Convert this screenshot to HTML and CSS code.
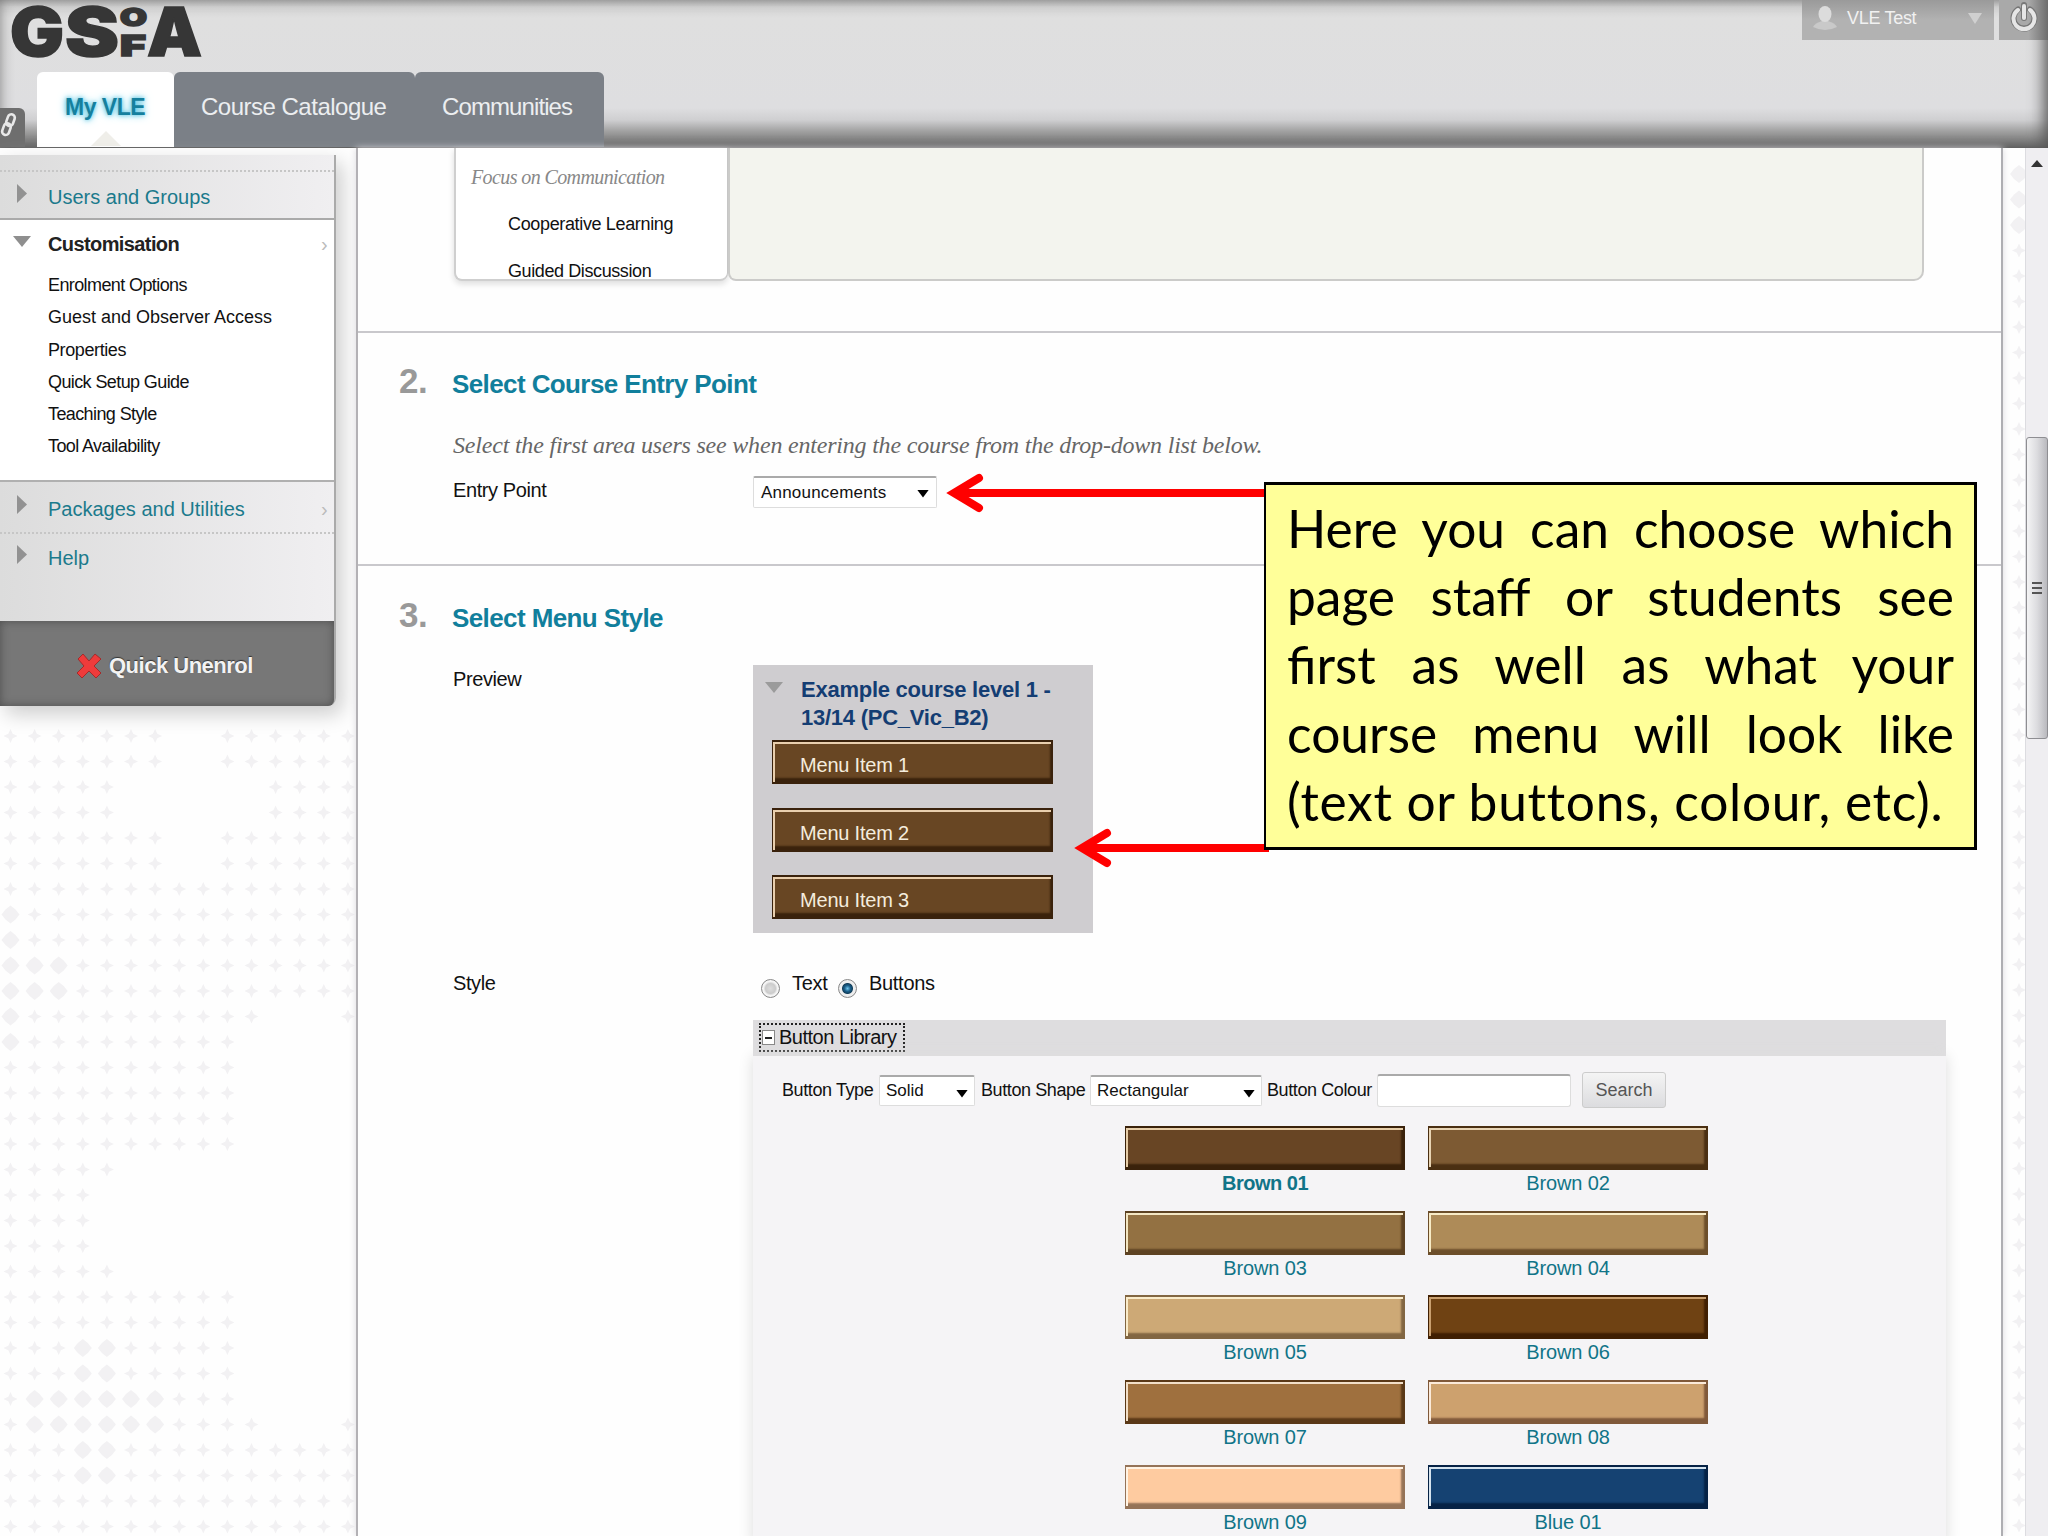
FILE: index.html
```
<!DOCTYPE html>
<html lang="en">
<head>
    <meta charset="UTF-8">
    <meta name="viewport" content="width=device-width, initial-scale=1.0">
    <title>My VLE - Customisation</title>
    <link rel="stylesheet" href="styles.css">
</head>
<body>
    <header class="top-bar">
        <div class="brand-row">
            <svg class="logo" width="206" height="66" viewBox="0 0 206 66">
                <text x="10" y="56" font-size="67" textLength="54" lengthAdjust="spacingAndGlyphs">G</text>
                <text x="65" y="56" font-size="67" textLength="54" lengthAdjust="spacingAndGlyphs">S</text>
                <text x="120" y="26" font-size="24" textLength="27" lengthAdjust="spacingAndGlyphs">O</text>
                <text x="120" y="56" font-size="29" textLength="26" lengthAdjust="spacingAndGlyphs">F</text>
                <text x="147" y="56" font-size="67" textLength="55" lengthAdjust="spacingAndGlyphs">A</text>
            </svg>
            <div class="user-tools">
                <div class="user-menu">
                    <svg width="24" height="26" viewBox="0 0 24 26">
                        <path d="M0 22 Q2 18 9 16 L15 16 Q22 18 24 22 Q18 25 12 25 Q6 25 0 22Z" fill="#c9c9c9"/>
                        <ellipse cx="12" cy="9" rx="6.5" ry="8" fill="#dcdcdc"/>
                    </svg>
                    <span class="user-name">VLE Test</span>
                    <svg class="user-arrow" width="14" height="11" viewBox="0 0 14 11"><path d="M0 0H14L7 11Z" fill="#d0d0d0"/></svg>
                </div>
                <div class="power">
                    <svg width="28" height="32" viewBox="0 0 28 32" fill="none" stroke-linecap="round">
                        <path d="M8 8.5 A10.5 10.5 0 1 0 20 8.5" stroke="#777" stroke-width="6"/>
                        <path d="M14 4V17" stroke="#777" stroke-width="6"/>
                        <path d="M8 9 A10.5 10.5 0 1 0 20 9" stroke="#e6e6e6" stroke-width="4"/>
                        <path d="M14 5V17" stroke="#e6e6e6" stroke-width="4"/>
                    </svg>
                </div>
            </div>
        </div>
        <nav class="tabs">
            <div class="link-tab">
                <svg width="18" height="26" viewBox="0 0 18 26" fill="none" stroke="#e8e8e8" stroke-width="2.6">
                    <rect x="7" y="2" width="7" height="12" rx="3.5" transform="rotate(20 10 8)"/>
                    <rect x="3" y="11" width="7" height="12" rx="3.5" transform="rotate(20 6 17)"/>
                </svg>
            </div>
            <a class="tab active">My VLE</a>
            <a class="tab catalogue">Course Catalogue</a>
            <a class="tab communities">Communities</a>
        </nav>
    </header>

    <main class="page">
        <svg class="dots" id="dots" width="2025" height="1388"></svg>

        <aside class="sidebar">
            <div class="side-row first"><i class="tri right"></i><span>Users and Groups</span></div>
            <div class="side-open">
                <div class="side-head"><i class="tri down"></i><span>Customisation</span><b class="chev">›</b></div>
                <ul class="side-list">
                    <li class="tight">Enrolment Options</li>
                    <li class="wide">Guest and Observer Access</li>
                    <li>Properties</li>
                    <li class="tight">Quick Setup Guide</li>
                    <li class="tight">Teaching Style</li>
                    <li class="tight">Tool Availability</li>
                </ul>
            </div>
            <div class="side-row packages"><i class="tri right"></i><span>Packages and Utilities</span><b class="chev">›</b></div>
            <div class="side-row help"><i class="tri right"></i><span>Help</span></div>
            <div class="unenrol">
                <svg width="26" height="26" viewBox="0 0 26 26"><path d="M2 6 L7 1 L13 8 L19 1 L25 6 L18 13 L25 20 L20 25 L13 18 L6 25 L1 20 L8 13Z" fill="#ee3b3b" stroke="#a52a2a"/></svg>
                <span>Quick Unenrol</span>
            </div>
        </aside>

        <div class="content">
            <section class="styles-section">
                <div class="style-picker">
                    <div class="style-list">
                        <div class="style-group">Focus on Communication</div>
                        <div class="style-name">Cooperative Learning</div>
                        <div class="style-name guided">Guided Discussion</div>
                    </div>
                    <div class="style-preview"></div>
                </div>
            </section>

            <section class="step entry">
                <h2><span class="num">2.</span>Select Course Entry Point</h2>
                <p class="hint">Select the first area users see when entering the course from the drop-down list below.</p>
                <div class="field">
                    <label>Entry Point</label>
                    <div class="select announce"><span>Announcements</span><i class="caret"></i></div>
                </div>
            </section>

            <section class="step menu-style">
                <h2><span class="num">3.</span>Select Menu Style</h2>
                <div class="field preview-field">
                    <label>Preview</label>
                    <div class="menu-preview">
                        <div class="preview-title"><i class="tri down"></i><span>Example course level 1 -<br>13/14 (PC_Vic_B2)</span></div>
                        <div class="menu-btn">Menu Item 1</div>
                        <div class="menu-btn">Menu Item 2</div>
                        <div class="menu-btn">Menu Item 3</div>
                    </div>
                </div>
                <div class="field style-field">
                    <label>Style</label>
                    <div class="radios">
                        <i class="radio"></i><span class="radio-text">Text</span>
                        <i class="radio checked"></i><span class="radio-buttons">Buttons</span>
                    </div>
                </div>
                <div class="library">
                    <div class="library-bar"><div class="library-toggle"><i class="minus"></i><span>Button Library</span></div></div>
                    <div class="library-body">
                        <div class="filters">
                            <span class="f-type">Button Type</span>
                            <div class="select solid"><span>Solid</span><i class="caret"></i></div>
                            <span class="f-shape">Button Shape</span>
                            <div class="select shape"><span>Rectangular</span><i class="caret"></i></div>
                            <span class="f-colour">Button Colour</span>
                            <div class="text-input"></div>
                            <div class="search">Search</div>
                        </div>
                        <div class="swatches">
                            <div class="swatch brown1 selected"><i></i>Brown 01</div>
                            <div class="swatch brown2"><i></i>Brown 02</div>
                            <div class="swatch brown3"><i></i>Brown 03</div>
                            <div class="swatch brown4"><i></i>Brown 04</div>
                            <div class="swatch brown5"><i></i>Brown 05</div>
                            <div class="swatch brown6"><i></i>Brown 06</div>
                            <div class="swatch brown7"><i></i>Brown 07</div>
                            <div class="swatch brown8"><i></i>Brown 08</div>
                            <div class="swatch brown9"><i></i>Brown 09</div>
                            <div class="swatch blue1"><i></i>Blue 01</div>
                        </div>
                    </div>
                </div>
            </section>
        </div>

        <div class="scrollbar">
            <svg width="14" height="8" viewBox="0 0 14 8"><path d="M7 0L13 7H1Z" fill="#333"/></svg>
            <div class="thumb"><i></i><i></i><i></i></div>
        </div>
    </main>

    <!-- Notes over the page -->
    <svg class="arrow arrow-entry" width="324" height="44" viewBox="0 0 324 44" fill="none" stroke="#f00" stroke-width="8">
        <path d="M10 22H324"/>
        <path d="M34 7L9 22L34 37" stroke-linecap="round"/>
    </svg>
    <svg class="arrow arrow-menu" width="196" height="44" viewBox="0 0 196 44" fill="none" stroke="#f00" stroke-width="8">
        <path d="M10 22H196"/>
        <path d="M34 7L9 22L34 37" stroke-linecap="round"/>
    </svg>
    <div class="callout">
        <div>Here you can choose which</div>
        <div>page staff or students see</div>
        <div>first as well as what your</div>
        <div>course menu will look like</div>
        <div class="last">(text or buttons, colour, etc).</div>
    </div>

    <script src="script.js"></script>
</body>
</html>
```

FILE: styles.css
```
/* General Styling */
* {
    box-sizing: border-box;
}

body {
    margin: 0;
    width: 2048px;
    height: 1536px;
    overflow: hidden;
    position: relative;
    font-family: "Liberation Sans", Arial, sans-serif;
    font-size: 20px;
    color: #111;
    background: #fefefe;
}

h2, p, ul {
    margin: 0;
    padding: 0;
}

i, b {
    display: block;
    flex: none;
}

svg {
    display: block;
    flex: none;
}

/* Header */
.top-bar {
    height: 148px;
    display: flex;
    flex-direction: column;
    justify-content: space-between;
    background: linear-gradient(#b9b9b9 0, #d2d2d2 7px, #dfdfdf 18px, #dedee0 108px, #cfcfd1 120px, #a2a2a2 131px, #6c6c6c 146px, #5c5c5c 148px);
    box-shadow: inset -10px 0 16px -6px #555, inset 8px 0 14px -8px #888;
}

.brand-row {
    display: flex;
    justify-content: space-between;
}

.logo {
    font-family: Inter, "DejaVu Sans", sans-serif;
    font-weight: 900;
    fill: #363636;
    stroke: #363636;
    stroke-width: 1.5px;
}

.user-tools {
    display: flex;
    gap: 5px;
    height: 40px;
    color: #f1f1f1;
}

.user-menu {
    display: flex;
    align-items: center;
    width: 192px;
    padding: 0 12px 4px 11px;
    background: linear-gradient(#9a9a9a, #b2b2b2 50%);
}

.user-name {
    margin-left: 10px;
    font-size: 18px;
    letter-spacing: -0.3px;
}

.user-arrow {
    margin-left: auto;
}

.power {
    width: 49px;
    padding: 1px 0 0 11px;
    background: linear-gradient(90deg, #a9a9a9 60%, #6d6d6d);
}

.tabs {
    display: flex;
    align-items: flex-end;
    height: 76px;
    padding-bottom: 1px;
}

.link-tab {
    width: 25px;
    height: 39px;
    margin-right: 12px;
    padding: 4px 0 0 0;
    background: #6e6e6e;
    border-radius: 0 6px 0 0;
}

.tab {
    height: 75px;
    line-height: 70px;
    font-size: 24px;
    letter-spacing: -0.5px;
    color: #eceef0;
    background: #7b8087;
    border-radius: 6px 6px 0 0;
}

.tab.active {
    width: 137px;
    padding-left: 28px;
    font-size: 23px;
    font-weight: bold;
    color: #15809e;
    text-shadow: 0 0 4px #4fc0e0, 0 0 8px #6fd0e8;
    background: #fff;
}

/* pointer at the foot of the open tab */
.tab.active::after {
    content: "";
    display: block;
    width: 30px;
    height: 15px;
    margin: -11px 0 0 26px;
    background: #efeee9;
    clip-path: polygon(50% 0, 100% 100%, 0 100%);
}

.catalogue {
    width: 241px;
    padding-left: 27px;
}

.communities {
    width: 189px;
    padding-left: 27px;
    letter-spacing: -0.9px;
}

/* Page frame */
.page {
    position: relative;
    display: flex;
    height: 1388px;
}

.dots {
    position: absolute;
    left: 0;
    top: 0;
    fill: #f2f1f3;
}

/* Sidebar */
.sidebar {
    position: relative;
    width: 336px;
    height: 551px;
    margin: 7px 20px 0 0;
    border-right: 2px solid #aaa;
    background: linear-gradient(90deg, #dcdcdc, #f0eff1);
    border-radius: 0 0 8px 0;
    box-shadow: 6px 8px 20px #ccc;
}

.side-row, .side-head {
    display: flex;
    padding-left: 18px;
    line-height: 50px;
    color: #1b7a8c;
}

.side-row span, .side-head span {
    width: 253px;
}

.first {
    height: 48px;
    margin-top: 15px;
    border-top: 2px dotted #c6c6c6;
}

.packages {
    height: 50px;
    padding-top: 2px;
}

.help {
    height: 89px;
    border-top: 2px dotted #c6c6c6;
    line-height: 48px;
}

.side-open {
    height: 264px;
    background: #fff;
    border-top: 2px solid #aaa;
    border-bottom: 2px solid #b0b0b0;
}

.side-head {
    padding-left: 13px;
    line-height: 49px;
    font-weight: bold;
    letter-spacing: -0.6px;
    color: #222;
}

.side-row {
    padding-left: 17px;
}

.tri.right {
    width: 10px;
    height: 19px;
    margin: 12px 21px 0 0;
    background: #929292;
    clip-path: polygon(0 0, 100% 50%, 0 100%);
}

.packages .tri, .help .tri {
    margin-top: 11px;
}

.tri.down {
    width: 18px;
    height: 11px;
    margin: 16px 17px 0 0;
    background: #8f8f8f;
    clip-path: polygon(0 0, 100% 0, 50% 100%);
}

.chev {
    margin-left: 20px;
    font-weight: normal;
    color: #bbb;
}

.side-list {
    padding-left: 48px;
    list-style: none;
    font-size: 18px;
    line-height: 32.3px;
    letter-spacing: -0.4px;
}

.tight {
    letter-spacing: -0.6px;
}

.wide {
    letter-spacing: 0;
}

.unenrol {
    display: flex;
    align-items: center;
    height: 85px;
    padding: 5px 0 0 76px;
    gap: 7px;
    color: #f3f3f3;
    font-size: 22px;
    font-weight: bold;
    letter-spacing: -0.5px;
    text-shadow: 0 -1px 1px #333;
    background: #777;
    border-radius: 0 0 6px 0;
    box-shadow: inset 0 0 10px #4f4f4f;
}

/* Main content */
.content {
    position: relative;
    width: 1647px;
    background: #fefefe;
    border-left: 2px solid #b3b1b5;
    border-right: 2px solid #aeaeb2;
    box-shadow: 0 0 7px #dcdade;
}

.styles-section {
    height: 183px;
    padding-left: 96px;
}

.style-picker {
    display: flex;
    width: 1470px;
    height: 133px;
}

.style-list {
    width: 274px;
    height: 133px;
    overflow: hidden;
    background: #fff;
    border: 2px solid #cfcfcf;
    border-top: none;
    border-right: 1px solid #c6c6c6;
    border-radius: 0 0 8px 8px;
    box-shadow: 0 3px 6px #ddd;
}

.style-group {
    height: 53px;
    padding: 9px 0 0 15px;
    font: italic 20px/40px "Liberation Serif", serif;
    letter-spacing: -0.6px;
    color: #888;
}

.style-name {
    padding-left: 52px;
    font-size: 18px;
    line-height: 46px;
    letter-spacing: -0.35px;
}

.guided {
    padding-top: 1px;
    letter-spacing: -0.4px;
}

.style-preview {
    flex: 1;
    background: #f3f4ee;
    border: 2px solid #cbcbc9;
    border-top: none;
    border-radius: 0 0 10px 8px;
}

.step {
    border-top: 2px solid #c9c8cc;
    padding-left: 95px;
}

.entry {
    height: 233px;
    padding-top: 31px;
}

.menu-style {
    padding-top: 32px;
}

h2 {
    height: 40px;
    margin-left: -1px;
    line-height: 40px;
    font-size: 26px;
    letter-spacing: -0.6px;
    color: #117f9c;
}

.num {
    display: inline-block;
    width: 53px;
    margin-left: -53px;
    font-size: 35px;
    line-height: 30px;
    letter-spacing: -0.5px;
    color: #999;
}

.hint {
    margin-top: 21px;
    font: italic 24px/40px "Liberation Serif", serif;
    letter-spacing: -0.2px;
    color: #666;
}

.field {
    display: flex;
}

.field label {
    width: 300px;
    letter-spacing: -0.4px;
}

.entry .field {
    margin-top: 5px;
    align-items: center;
    line-height: 40px;
}

.select {
    display: flex;
    align-items: center;
    justify-content: space-between;
    background: #fff;
    border: 1px solid #ddd;
    border-top: 2px solid #aaa;
    border-radius: 2px;
    font-size: 17px;
    line-height: 28px;
    white-space: nowrap;
}

.announce {
    width: 184px;
    height: 32px;
    margin-top: 3px;
    padding: 1px 7px 0;
    letter-spacing: 0.2px;
}

.caret {
    width: 12px;
    height: 8px;
    background: #000;
    clip-path: polygon(0 0, 100% 0, 50% 100%);
}

.announce .caret {
    margin-top: 2px;
}

.preview-field {
    margin-top: 27px;
    line-height: 29px;
}

.menu-preview {
    width: 340px;
    height: 268px;
    padding: 11px 0 0 19px;
    background: #cfcdd0;
}

.preview-title {
    display: flex;
    height: 64px;
    margin-left: -7px;
    font-size: 22px;
    font-weight: bold;
    line-height: 27.5px;
    letter-spacing: -0.25px;
    color: #143d73;
}

.preview-title .tri {
    margin: 6px 18px 0 0;
    background: #9b9b9b;
}

.menu-btn {
    width: 281px;
    height: 44px;
    margin-bottom: 23.7px;
    padding-left: 27px;
    line-height: 46px;
    letter-spacing: -0.2px;
    color: #f4ecdd;
    background: #684623;
    border: 1px solid #3a220c;
    border-width: 2px 2px 2px 1px;
    box-shadow: inset 2px 2px 0 #e9cfae, inset -1px -4px 2px #3a220c;
}

.style-field {
    margin-top: 36px;
    line-height: 28px;
    letter-spacing: -0.3px;
}

.radios {
    display: flex;
    padding-left: 8px;
}

.radio {
    width: 19px;
    height: 19px;
    margin-top: 10px;
    border: 1px solid #888;
    border-radius: 50%;
    background: radial-gradient(#ddd 0, #ccc 5px, #f5f5f5 7px);
}

.radio.checked {
    background: radial-gradient(circle at 50% 50%, #6fc3ea 0, #1a5f8a 3px, #123f5c 5px, #eee 6px);
}

.radio-text {
    width: 46px;
    margin-left: 12px;
}

.radio-buttons {
    margin-left: 12px;
}

/* Button library */
.library {
    width: 1193px;
    margin: 22px 0 0 300px;
}

.library-bar {
    height: 36px;
    padding: 3px 6px;
    background: #dedddf;
}

.library-toggle {
    display: flex;
    align-items: center;
    gap: 4px;
    width: 146px;
    height: 29px;
    padding-left: 1px;
    border: 2px dotted #222;
    letter-spacing: -0.5px;
    white-space: nowrap;
}

.minus {
    width: 13px;
    height: 15px;
    border: 1px solid #888;
    background: linear-gradient(#222, #222) center / 7px 2px no-repeat #fff;
}

.library-body {
    height: 490px;
    padding: 16px 0 0 29px;
    background: #f5f4f6;
    box-shadow: 0 0 14px #ddd;
}

.filters {
    display: flex;
    align-items: center;
    height: 36px;
    font-size: 18px;
    letter-spacing: -0.4px;
    white-space: nowrap;
}

.f-type {
    width: 97px;
}

.f-shape {
    width: 109px;
    margin-left: 6px;
}

.f-colour {
    width: 110px;
    margin-left: 5px;
}

.solid, .shape {
    width: 96px;
    height: 31px;
    padding: 0 6px;
    letter-spacing: 0;
}

.shape {
    width: 172px;
}

.filters .caret {
    margin-top: 6px;
}

.text-input {
    width: 194px;
    height: 33px;
    background: #fff;
    border: 1px solid #ddd;
    border-top: 2px solid #aaa;
    border-radius: 3px;
}

.search {
    width: 84px;
    height: 36px;
    margin-left: 11px;
    line-height: 34px;
    text-align: center;
    letter-spacing: 0;
    color: #555;
    background: linear-gradient(#f4f4f4, #dcdcdf);
    border: 1px solid #ccc;
    border-radius: 3px;
}

.swatches {
    display: grid;
    grid-template-columns: 280px 280px;
    gap: 14.7px 23px;
    margin: 18px 0 0 343px;
}

.swatch {
    height: 70px;
    line-height: 26px;
    text-align: center;
    letter-spacing: -0.1px;
    color: #117488;
}

.swatch i {
    height: 44px;
    background: var(--face);
    border: solid var(--edge);
    border-width: 2px 2px 3px 1px;
    box-shadow: inset 2px 2px 0 var(--light), inset -2px -3px 2px var(--edge);
}

.selected {
    font-weight: bold;
    letter-spacing: -0.5px;
}

.brown1 { --face: #684524; --edge: #3a220b; --light: #e6cda8; }
.brown2 { --face: #7d5a33; --edge: #4a2f12; --light: #e8d4b4; }
.brown3 { --face: #937142; --edge: #5d4222; --light: #f3e6c2; }
.brown4 { --face: #ae8b58; --edge: #6c4e2a; --light: #f8ebc6; }
.brown5 { --face: #cda976; --edge: #826642; --light: #faeccb; }
.brown6 { --face: #6f4213; --edge: #401f02; --light: #c9a070; }
.brown7 { --face: #9f703e; --edge: #5a3817; --light: #f2dfc8; }
.brown8 { --face: #cda16e; --edge: #80593a; --light: #fbeada; }
.brown9 { --face: #fecba0; --edge: #957358; --light: #fff3e4; }
.blue1 { --face: #154272; --edge: #062245; --light: #d5e3ee; }

/* Scrollbar */
.scrollbar {
    display: flex;
    flex-direction: column;
    align-items: center;
    width: 23px;
    margin-left: 22px;
    padding-top: 12px;
    background: #efeef1;
    border-left: 1px solid #dcdce0;
}

.thumb {
    display: flex;
    flex-direction: column;
    justify-content: center;
    align-items: center;
    gap: 3px;
    width: 22px;
    height: 302px;
    margin-top: 269px;
    background: linear-gradient(90deg, #f4f4f5, #dcdcdf 50%, #b9b9be);
    border: 1px solid #8e8e92;
    border-radius: 3px;
}

.thumb i {
    width: 10px;
    height: 2px;
    background: #555;
}

/* Callout and arrows */
.arrow {
    position: absolute;
}

.arrow-entry {
    left: 945px;
    top: 471px;
}

.arrow-menu {
    left: 1073px;
    top: 826px;
}

.callout {
    position: absolute;
    left: 1264px;
    top: 482px;
    width: 713px;
    height: 368px;
    padding: 9px 20px 0 21px;
    background: #ffff99;
    border: 3px solid #000;
    border-left-width: 2px;
    font-family: Lato, "Open Sans", sans-serif;
    font-size: 51.5px;
    line-height: 68.2px;
    color: #000;
    white-space: nowrap;
}

.callout div {
    text-align: justify;
    text-align-last: justify;
}

.callout .last {
    text-align-last: left;
    letter-spacing: 0.7px;
}
```

FILE: script.js
```
const svg = document.getElementById('dots');

// one string per row: "." blank, "+" small dot, "o" large dot
const rows = [
    '+++++++..++++++', '+++++++..++++++', '+++++......++++', '+++++......++++',
    '+++++++..++++++', '+++++++..++++++', '+++++++++++++++', 'o++++++++++++++',
    'o++++++++++++++', 'ooo++++++++++++', 'ooo++++++++++++', 'o++++++++++...+',
    'o+++++++++', '++++++++++', '++++++++++', '++++++++++', '++++++++++',
    '+++++', '++++', '++++', '++++', '+++++', '++++++++++', '++++++++++',
    '+++oo+++++', '+++oo+++++', '+oooooo+++', '+oooooo++++...+',
    '+++oo++++++++++', '+++oo++++++++++', '+++++++++++++++', '+++++++++++++++'
];

function drawDot(x, y, size) {
    const dot = document.createElementNS('http://www.w3.org/2000/svg', 'path');
    const w = size === 'o' ? 9 : 7;
    const q = size === 'o' ? 5 : 2.2;
    dot.setAttribute('d', `M${x - w} ${y}L${x - q} ${y - q}L${x} ${y - w}L${x + q} ${y - q}L${x + w} ${y}L${x + q} ${y + q}L${x} ${y + w}L${x - q} ${y + q}Z`);
    svg.appendChild(dot);
}

rows.forEach((row, r) => {
    [...row].forEach((size, c) => {
        if (size !== '.') {
            drawDot(10.5 + c * 24.1, 588 + r * 25.5, size);
        }
    });
});

// strip between the content and the scrollbar
for (let y = 26; y < 1388; y += 25.5) {
    drawDot(2019, y, y < 90 ? 'o' : '+');
}
```
